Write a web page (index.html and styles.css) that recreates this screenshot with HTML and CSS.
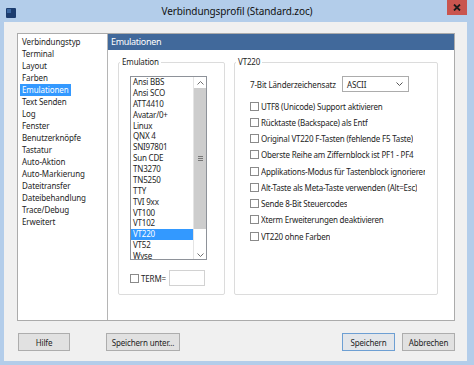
FILE: index.html
```html
<!DOCTYPE html>
<html lang="de">
<head>
  <meta charset="UTF-8" />
  <title>Verbindungsprofil (Standard.zoc)</title>
  <link rel="stylesheet" href="styles.css">
</head>
<body>
  <div class="window">
    <div class="titlebar">
      <svg class="app-icon" width="10" height="10" viewBox="0 0 10 10">
        <rect x="0" y="0" width="10" height="10" rx="1" fill="#1c3c6e"/>
        <rect x="1" y="1" width="4" height="4" fill="#3a66a0"/>
      </svg>
      <span class="title">Verbindungsprofil (Standard.zoc)</span>
      <div class="close">
        <svg width="8" height="7" viewBox="0 0 8 7">
          <path d="M1 0.5 L7 6.5 M7 0.5 L1 6.5" stroke="#1b1b1b" stroke-width="1.8"/>
        </svg>
      </div>
    </div>

    <div class="client">
      <div class="panel">
        <ul class="nav">
          <li><span>Verbindungstyp</span></li>
          <li><span>Terminal</span></li>
          <li><span>Layout</span></li>
          <li><span>Farben</span></li>
          <li><span class="selected">Emulationen</span></li>
          <li><span>Text Senden</span></li>
          <li><span>Log</span></li>
          <li><span>Fenster</span></li>
          <li><span>Benutzerknöpfe</span></li>
          <li><span>Tastatur</span></li>
          <li><span>Auto-Aktion</span></li>
          <li><span>Auto-Markierung</span></li>
          <li><span>Dateitransfer</span></li>
          <li><span>Dateibehandlung</span></li>
          <li><span>Trace/Debug</span></li>
          <li><span>Erweitert</span></li>
        </ul>

        <div class="page">
          <div class="page-head">Emulationen</div>
          <div class="page-body">
            <fieldset class="group group-emu">
              <legend>Emulation</legend>
              <div class="group-body">
                <div class="listbox">
                  <ul class="items">
                    <li>Ansi BBS</li>
                    <li>Ansi SCO</li>
                    <li>ATT4410</li>
                    <li>Avatar/0+</li>
                    <li>Linux</li>
                    <li>QNX 4</li>
                    <li>SNI97801</li>
                    <li>Sun CDE</li>
                    <li>TN3270</li>
                    <li>TN5250</li>
                    <li>TTY</li>
                    <li>TVI 9xx</li>
                    <li>VT100</li>
                    <li>VT102</li>
                    <li class="selected">VT220</li>
                    <li>VT52</li>
                    <li>Wyse</li>
                  </ul>
                  <div class="scrollbar">
                    <div class="sb-btn sb-up">
                      <svg width="7" height="4" viewBox="0 0 7 4"><path d="M0.5 3.5 L3.5 0.5 L6.5 3.5" fill="none" stroke="#707070"/></svg>
                    </div>
                    <div class="sb-thumb">
                      <svg width="5" height="5" viewBox="0 0 5 5"><path d="M0 0.5 H5 M0 2.5 H5 M0 4.5 H5" stroke="#777"/></svg>
                    </div>
                    <div class="sb-track"></div>
                    <div class="sb-btn sb-down">
                      <svg width="7" height="4" viewBox="0 0 7 4"><path d="M0.5 0.5 L3.5 3.5 L6.5 0.5" fill="none" stroke="#707070"/></svg>
                    </div>
                  </div>
                </div>
                <div class="term-row">
                  <span class="check"></span>
                  <span class="term-label">TERM=</span>
                  <span class="term-input"></span>
                </div>
              </div>
            </fieldset>

            <fieldset class="group group-vt">
              <legend>VT220</legend>
              <div class="group-body">
                <div class="charset-row">
                  <span class="charset-label">7-Bit Länderzeichensatz</span>
                  <div class="select">
                    <span>ASCII</span>
                    <svg width="7" height="4" viewBox="0 0 7 4"><path d="M0.5 0.5 L3.5 3.5 L6.5 0.5" fill="none" stroke="#555"/></svg>
                  </div>
                </div>
                <ul class="checks">
                  <li><span class="check"></span><span class="check-label">UTF8 (Unicode) Support aktivieren</span></li>
                  <li><span class="check"></span><span class="check-label">Rücktaste (Backspace) als Entf</span></li>
                  <li><span class="check"></span><span class="check-label">Original VT220 F-Tasten (fehlende F5 Taste)</span></li>
                  <li><span class="check"></span><span class="check-label short">Oberste Reihe am Ziffernblock ist PF1 - PF4</span></li>
                  <li><span class="check"></span><span class="check-label">Applikations-Modus für Tastenblock ignorieren</span></li>
                  <li><span class="check"></span><span class="check-label">Alt-Taste als Meta-Taste verwenden (Alt=Esc)</span></li>
                  <li><span class="check"></span><span class="check-label">Sende 8-Bit Steuercodes</span></li>
                  <li><span class="check"></span><span class="check-label">Xterm Erweiterungen deaktivieren</span></li>
                  <li><span class="check"></span><span class="check-label">VT220 ohne Farben</span></li>
                </ul>
              </div>
            </fieldset>
          </div>
        </div>
      </div>

      <div class="buttons">
        <button class="btn btn-help">Hilfe</button>
        <button class="btn btn-saveas">Speichern unter...</button>
        <span class="spacer"></span>
        <button class="btn btn-default">Speichern</button>
        <button class="btn">Abbrechen</button>
      </div>
    </div>
  </div>
</body>
</html>
```

FILE: styles.css
```css
* {
  box-sizing: border-box;
}
body {
  margin: 0;
  font-family: "Noto Sans", "Open Sans", sans-serif;
  font-size: 8px;
  letter-spacing: -0.15px;
  color: #1e1e1e;
}
ul {
  list-style: none;
  margin: 0;
  padding: 0;
}

/* window frame */
.window {
  width: 474px;
  height: 365px;
  background: #b3cdea;
  display: flex;
  flex-direction: column;
}
.titlebar {
  height: 22px;
  display: grid;
  grid-template-columns: 1fr auto 1fr;
  align-items: center;
}
.app-icon {
  margin-left: 6px;
  margin-top: 3px;
}
.title {
  font-size: 10px;
  letter-spacing: -0.1px;
  color: #111;
}
.close {
  justify-self: end;
  align-self: start;
  width: 20px;
  height: 15px;
  margin-right: 7px;
  background: #c9554f;
  display: flex;
  align-items: center;
  justify-content: center;
}
.client {
  flex: 1;
  margin: 0 7px 4px 4px;
  background: #f0f0f0;
  padding: 11px 12px 10px 13px;
  display: flex;
  flex-direction: column;
}

/* main panel */
.panel {
  height: 288px;
  border: 1px solid #ababab;
  background: #fff;
  display: flex;
}
.nav {
  width: 90px;
  border-right: 1px solid #b5b5b5;
  padding: 2px 0 0 2px;
  line-height: 12px;
  letter-spacing: -0.1px;
}
.nav span {
  display: inline-block;
  padding: 0 2px;
}
.nav .selected {
  background: #3399ff;
  color: #fff;
}
.page {
  flex: 1;
  display: flex;
  flex-direction: column;
}
.page-head {
  height: 16px;
  background: #41699b;
  color: #fff;
  font-size: 9px;
  letter-spacing: -0.3px;
  line-height: 16px;
  padding-left: 3px;
}
.page-body {
  flex: 1;
  display: flex;
  gap: 9px;
  padding: 6px 16px 25px 10px;
}

/* group boxes */
.group {
  margin: 0;
  padding: 0;
  min-width: 0;
  border: 1px solid #dcdcdc;
  border-radius: 2px;
}
.group legend {
  padding: 0 2px;
  margin-left: 1px;
  line-height: 12px;
}
.group-emu {
  width: 107px;
  flex: none;
}
.group-vt {
  flex: 1;
}
.group-emu .group-body {
  padding: 8px 17px 0 11px;
}
.group-vt .group-body {
  padding: 8px 0 0 15px;
}

/* emulation list */
.listbox {
  height: 184px;
  border: 1px solid #8e9299;
  display: flex;
  overflow: hidden;
}
.items {
  flex: 1;
  line-height: 10.875px;
  letter-spacing: -0.2px;
}
.items li {
  padding-left: 2px;
  white-space: nowrap;
}
.items .selected {
  background: #3399ff;
  color: #fff;
}
.scrollbar {
  width: 13px;
  display: flex;
  flex-direction: column;
  background: #fff;
  border-left: 1px solid #e4e4e4;
}
.sb-btn {
  display: flex;
  align-items: center;
  justify-content: center;
}
.sb-up {
  height: 11px;
}
.sb-thumb {
  height: 141px;
  background: #cdcdcd;
  display: flex;
  align-items: center;
  justify-content: center;
}
.sb-track {
  height: 21px;
}
.sb-down {
  height: 9px;
}

.check {
  width: 9px;
  height: 9px;
  border: 1px solid #8a8a8a;
  background: #fff;
  flex: none;
}
.term-row {
  margin-top: 10px;
  height: 16px;
  display: flex;
  align-items: center;
  white-space: nowrap;
}
.term-label {
  margin-left: 2px;
}
.term-input {
  width: 36px;
  height: 16px;
  margin-left: 3px;
  border: 1px solid #d2d2d2;
  background: #fff;
}

/* VT220 options */
.charset-row {
  height: 16px;
  display: flex;
  align-items: center;
  white-space: nowrap;
}
.charset-label {
  width: 92px;
}
.select {
  width: 67px;
  height: 16px;
  border: 1px solid #acacac;
  background: #fff;
  display: flex;
  align-items: center;
  justify-content: space-between;
  padding: 0 5px 0 4px;
}
.checks {
  margin-top: 6px;
  letter-spacing: -0.2px;
}
.checks li {
  height: 16.25px;
  display: flex;
  align-items: center;
}
.check-label {
  margin-left: 2px;
  max-width: 164px;
  white-space: nowrap;
  overflow: hidden;
}
.check-label.short {
  max-width: 154px;
}

/* dialog buttons */
.buttons {
  margin-top: 12px;
  height: 18px;
  display: flex;
  gap: 7px;
}
.btn {
  height: 18px;
  width: 53px;
  padding: 0;
  font: inherit;
  letter-spacing: inherit;
  white-space: nowrap;
  color: #1e1e1e;
  background: #e1e1e1;
  border: 1px solid #adadad;
}
.btn-help {
  width: 52px;
  margin-left: 1px;
}
.btn-saveas {
  width: 74px;
  margin-left: 29px;
}
.btn-default {
  border-color: #6d9fd3;
  background: #e3e6ea;
}
.spacer {
  flex: 1;
}
```
